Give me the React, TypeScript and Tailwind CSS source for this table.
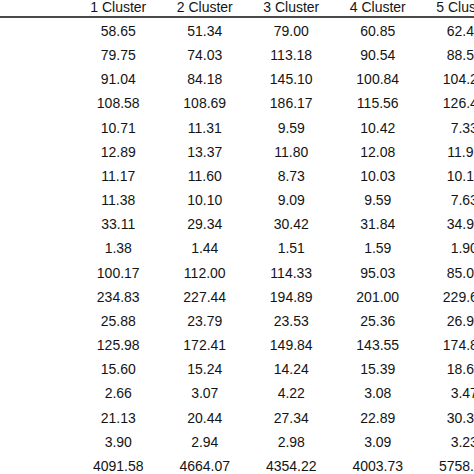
const headers = ['1 Cluster', '2 Cluster', '3 Cluster', '4 Cluster', '5 Cluster']

const rows: string[][] = [
  ['58.65', '51.34', '79.00', '60.85', '62.41'],
  ['79.75', '74.03', '113.18', '90.54', '88.56'],
  ['91.04', '84.18', '145.10', '100.84', '104.22'],
  ['108.58', '108.69', '186.17', '115.56', '126.44'],
  ['10.71', '11.31', '9.59', '10.42', '7.33'],
  ['12.89', '13.37', '11.80', '12.08', '11.96'],
  ['11.17', '11.60', '8.73', '10.03', '10.15'],
  ['11.38', '10.10', '9.09', '9.59', '7.63'],
  ['33.11', '29.34', '30.42', '31.84', '34.96'],
  ['1.38', '1.44', '1.51', '1.59', '1.90'],
  ['100.17', '112.00', '114.33', '95.03', '85.06'],
  ['234.83', '227.44', '194.89', '201.00', '229.61'],
  ['25.88', '23.79', '23.53', '25.36', '26.95'],
  ['125.98', '172.41', '149.84', '143.55', '174.82'],
  ['15.60', '15.24', '14.24', '15.39', '18.61'],
  ['2.66', '3.07', '4.22', '3.08', '3.47'],
  ['21.13', '20.44', '27.34', '22.89', '30.33'],
  ['3.90', '2.94', '2.98', '3.09', '3.23'],
  ['4091.58', '4664.07', '4354.22', '4003.73', '5758.21'],
]

export default function App() {
  return (
    <div className="h-[474px] w-[474px] overflow-hidden bg-white font-['Liberation_Sans',Arial,sans-serif] text-[14px] text-[#141414]">
      {/* header */}
      <div className="grid h-[16px] w-[520px] grid-cols-[75px_repeat(5,86.5px)] leading-[15px]">
        <div />
        {headers.map((h) => (
          <div key={h} className="text-center whitespace-nowrap">
            {h}
          </div>
        ))}
      </div>
      <div className="h-[2px] w-full bg-[#4a4a4a]" />

      {/* body */}
      <div className="mt-[1px] flex w-[520px] flex-col">
        {rows.map((row, i) => (
          <div
            key={i}
            className="grid h-[24.17px] grid-cols-[75px_repeat(5,86.5px)] items-center leading-[24.17px]"
          >
            <div />
            {row.map((v, j) => (
              <div key={j} className="text-center whitespace-nowrap">
                {v}
              </div>
            ))}
          </div>
        ))}
      </div>
    </div>
  )
}
